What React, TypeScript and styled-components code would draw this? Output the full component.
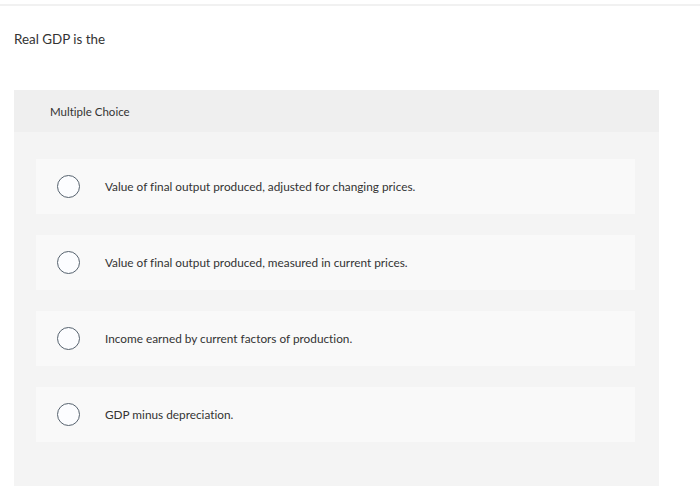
import styled, { createGlobalStyle } from "styled-components";

const GlobalStyle = createGlobalStyle`
  html, body {
    margin: 0;
    padding: 0;
    background: #ffffff;
    font-family: Lato, "Liberation Sans", sans-serif;
    font-variant-ligatures: none;
    color: #333333;
  }
`;

const Page = styled.div`
  width: 700px;
  height: 499px;
  overflow: hidden;
  padding-top: 4px;
  box-sizing: border-box;
`;

const TopRule = styled.div`
  height: 2px;
  background: #f1f1f1;
`;

const Question = styled.p`
  margin: 0;
  padding: 25px 0 0 14px;
  font-size: 13.4px;
  line-height: 16px;
  color: #333;
`;

const Panel = styled.section`
  margin: 43px 0 0 14px;
  width: 645px;
  background: #f4f4f4;
`;

const PanelHeader = styled.div`
  height: 42px;
  display: flex;
  align-items: center;
  padding-left: 36px;
  background: #efefef;
  font-size: 11.5px;
  color: #333;
`;

const OptionList = styled.ul`
  list-style: none;
  margin: 0;
  padding: 27px 24px 44px 22px;
  display: flex;
  flex-direction: column;
  row-gap: 21px;
`;

const OptionCard = styled.li`
  height: 55px;
  display: flex;
  align-items: center;
  column-gap: 25px;
  padding-left: 21px;
  background: #f9f9f9;
`;

const Radio = styled.span`
  flex-shrink: 0;
  width: 21px;
  height: 21px;
  border: 1.5px solid #56626e;
  border-radius: 50%;
  background: #fcfdff;
`;

const OptionText = styled.span`
  font-size: 11.8px;
  color: #333;
`;

const options = [
  "Value of final output produced, adjusted for changing prices.",
  "Value of final output produced, measured in current prices.",
  "Income earned by current factors of production.",
  "GDP minus depreciation.",
];

const App = () => {
  return (
    <>
      <GlobalStyle />
      <Page>
        <TopRule />
        <Question>Real GDP is the</Question>
        <Panel>
          <PanelHeader>Multiple Choice</PanelHeader>
          <OptionList>
            {options.map((text) => (
              <OptionCard key={text}>
                <Radio />
                <OptionText>{text}</OptionText>
              </OptionCard>
            ))}
          </OptionList>
        </Panel>
      </Page>
    </>
  );
};

export default App;
